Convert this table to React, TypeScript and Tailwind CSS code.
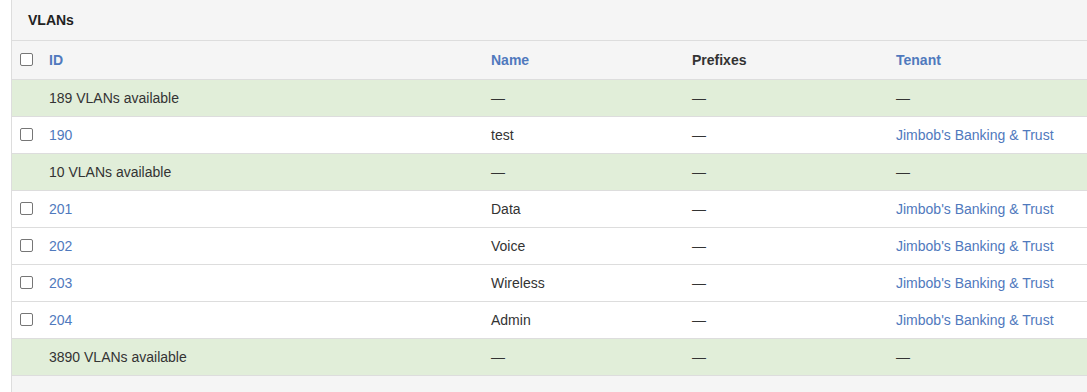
const rows: { kind: "avail" | "vlan"; id?: string; text?: string; name?: string }[] = [
  { kind: "avail", text: "189 VLANs available" },
  { kind: "vlan", id: "190", name: "test" },
  { kind: "avail", text: "10 VLANs available" },
  { kind: "vlan", id: "201", name: "Data" },
  { kind: "vlan", id: "202", name: "Voice" },
  { kind: "vlan", id: "203", name: "Wireless" },
  { kind: "vlan", id: "204", name: "Admin" },
  { kind: "avail", text: "3890 VLANs available" },
];

const Checkbox = () => (
  <span className="block w-[13px] h-[13px] border border-[#767676] rounded-[2px] bg-white" />
);

const cell = "px-2 h-[37px] align-middle text-left";

export default function App() {
  return (
    <div
      className="w-[1087px] h-[392px] overflow-hidden bg-white text-[14px] text-[#333] leading-5"
      style={{ fontFamily: '"Liberation Sans", Arial, sans-serif' }}
    >
      <div className="ml-[11px] w-[1100px] border-l border-[#ddd] bg-[#f5f5f5]">
        <div className="h-[41px] px-4 flex items-center border-b border-[#ddd] font-bold text-[14px] text-[#222]">
          VLANs
        </div>
        <table className="table-fixed w-[1100px] border-collapse">
          <colgroup>
            <col className="w-[29px]" />
            <col className="w-[442px]" />
            <col className="w-[201px]" />
            <col className="w-[204px]" />
            <col />
          </colgroup>
          <thead>
            <tr className="border-b border-[#ddd]">
              <th className={`${cell} h-[38px] pl-2 pr-0`}>
                <Checkbox />
              </th>
              <th className={`${cell} h-[38px] text-[#5079bd] font-bold`}>ID</th>
              <th className={`${cell} h-[38px] text-[#5079bd] font-bold`}>Name</th>
              <th className={`${cell} h-[38px] font-bold`}>Prefixes</th>
              <th className={`${cell} h-[38px] text-[#5079bd] font-bold`}>Tenant</th>
            </tr>
          </thead>
          <tbody>
            {rows.map((r, i) =>
              r.kind === "avail" ? (
                <tr key={i} className="bg-[#e1eed9] border-b border-[#ddd]">
                  <td className={cell} />
                  <td className={cell}>{r.text}</td>
                  <td className={cell}>—</td>
                  <td className={cell}>—</td>
                  <td className={cell}>—</td>
                </tr>
              ) : (
                <tr key={i} className="bg-white border-b border-[#ddd]">
                  <td className={`${cell} pl-2 pr-0`}>
                    <Checkbox />
                  </td>
                  <td className={`${cell} text-[#5079bd]`}>{r.id}</td>
                  <td className={cell}>{r.name}</td>
                  <td className={cell}>—</td>
                  <td className={`${cell} text-[#5079bd]`}>Jimbob's Banking &amp; Trust</td>
                </tr>
              )
            )}
          </tbody>
        </table>
        <div className="h-[20px]" />
      </div>
    </div>
  );
}
